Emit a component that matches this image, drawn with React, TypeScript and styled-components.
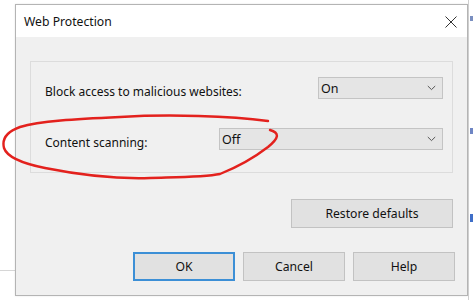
import styled, { createGlobalStyle } from "styled-components";

const GlobalStyle = createGlobalStyle`
  html, body {
    margin: 0;
    padding: 0;
    background: #ffffff;
    overflow: hidden;
  }
  body {
    font-family: "Noto Sans", "Open Sans", sans-serif;
  }
`;

export const Page = styled.div`
  width: 474px;
  height: 300px;
  display: flex;
  align-items: flex-start;
  position: relative;
  overflow: hidden;
`;

export const LeftGutter = styled.div`
  width: 15px;
  flex-shrink: 0;
  height: 300px;
  display: flex;
  flex-direction: column;
  justify-content: flex-end;
`;

export const GutterLine = styled.div`
  height: 1px;
  background: #d6d6d6;
  margin-bottom: 29px;
`;

export const Dialog = styled.div`
  margin-top: 4px;
  width: 453px;
  height: 292px;
  box-sizing: border-box;
  border: 1px solid #b4b4b4;
  background: #f0f0f0;
  display: flex;
  flex-direction: column;
  flex-shrink: 0;
  box-shadow: 0 0 2px rgba(0, 0, 0, 0.1);
`;

export const TitleBar = styled.div`
  height: 32px;
  background: #ffffff;
  display: flex;
  align-items: center;
  justify-content: space-between;
  padding: 0 10px 0 8px;
  flex-shrink: 0;
`;

export const Title = styled.span`
  font-size: 12.2px;
  color: #111;
  margin-top: 1px;
`;

export const CloseButton = styled.div`
  width: 12px;
  height: 12px;
  display: flex;
  margin-top: 1px;
  svg {
    display: block;
  }
`;

export const Body = styled.div`
  flex: 1;
  display: flex;
  flex-direction: column;
  padding: 24px 14px 14px 14px;
`;

export const GroupBox = styled.div`
  height: 112px;
  box-sizing: border-box;
  border: 1px solid #dcdcdc;
  display: flex;
  flex-direction: column;
  gap: 29px;
  padding: 15px 9px 0 14px;
`;

export const Row = styled.div`
  display: flex;
  align-items: center;
  justify-content: space-between;
  height: 22px;
`;

export const Label = styled.span`
  font-size: 12px;
  color: #111;
  margin-top: 6px;
`;

export const Select = styled.div<{ $width: number }>`
  width: ${({ $width }) => $width}px;
  height: 22px;
  box-sizing: border-box;
  border: 1px solid #c4c4c4;
  background: #e5e5e5;
  display: flex;
  align-items: center;
  justify-content: space-between;
  padding: 0 6px 0 2px;
  font-size: 12.5px;
  color: #111;
`;

export const RestoreRow = styled.div`
  display: flex;
  justify-content: flex-end;
  margin-top: 26px;
`;

export const Button = styled.div<{ $width: number; $default?: boolean }>`
  width: ${({ $width }) => $width}px;
  height: 29px;
  box-sizing: border-box;
  border: ${({ $default }) => ($default ? "2px solid #3c8fd6" : "1px solid #c2c2c2")};
  background: #e1e1e1;
  display: flex;
  align-items: center;
  justify-content: center;
  font-size: 12.2px;
  color: #111;
`;

export const ButtonRow = styled.div`
  display: flex;
  justify-content: flex-end;
  gap: 8px;
  margin-top: 24px;
  margin-right: -2px;
`;

export const RightStrip = styled.div`
  width: 6px;
  height: 300px;
  flex-shrink: 0;
  border-left: 1px solid #cfcfcf;
  box-sizing: border-box;
  display: flex;
  flex-direction: column;
`;

export const StripMark = styled.div<{ $top: number; $color: string; $h: number }>`
  margin-top: ${({ $top }) => $top}px;
  height: ${({ $h }) => $h}px;
  width: 3px;
  margin-left: 1px;
  background: ${({ $color }) => $color};
`;

export const Annotation = styled.svg`
  position: absolute;
  left: 0;
  top: 0;
  pointer-events: none;
`;

const Chevron = () => (
  <svg width="9" height="6" viewBox="0 0 9 6">
    <path d="M0.8 1 L4.5 4.6 L8.2 1" fill="none" stroke="#555" strokeWidth="1" />
  </svg>
);

export default function App() {
  return (
    <>
      <GlobalStyle />
      <Page>
        <LeftGutter>
          <GutterLine />
        </LeftGutter>
        <Dialog>
          <TitleBar>
            <Title>Web Protection</Title>
            <CloseButton>
              <svg width="12" height="12" viewBox="0 0 12 12">
                <path d="M0.5 0.5 L11.5 11.5 M11.5 0.5 L0.5 11.5" stroke="#333" strokeWidth="1" fill="none" />
              </svg>
            </CloseButton>
          </TitleBar>
          <Body>
            <GroupBox>
              <Row>
                <Label>Block access to malicious websites:</Label>
                <Select $width={125}>
                  <span>On</span>
                  <Chevron />
                </Select>
              </Row>
              <Row>
                <Label>Content scanning:</Label>
                <Select $width={224}>
                  <span>Off</span>
                  <Chevron />
                </Select>
              </Row>
            </GroupBox>
            <RestoreRow>
              <Button $width={162}>Restore defaults</Button>
            </RestoreRow>
            <ButtonRow>
              <Button $width={102} $default>OK</Button>
              <Button $width={102}>Cancel</Button>
              <Button $width={102}>Help</Button>
            </ButtonRow>
          </Body>
        </Dialog>
        <RightStrip>
          <StripMark $top={16} $color="#7a8fc0" $h={5} />
          <StripMark $top={107} $color="#6f86c4" $h={6} />
          <StripMark $top={80} $color="#3f6fc8" $h={8} />
        </RightStrip>
        <Annotation width="474" height="300" viewBox="0 0 474 300">
          <path
            d="M268 121 C230 116 170 114 120 117 C75 119 40 121 20 127 C6 132 2 140 4 148 C7 157 20 163 45 168 C80 175 120 179 150 178 C185 177 205 177 220 174 C235 168 255 157 268 147 C279 138 280 133 270 130"
            fill="none"
            stroke="#e3211d"
            strokeWidth="2.4"
            strokeLinecap="round"
            strokeLinejoin="round"
          />
        </Annotation>
      </Page>
    </>
  );
}
